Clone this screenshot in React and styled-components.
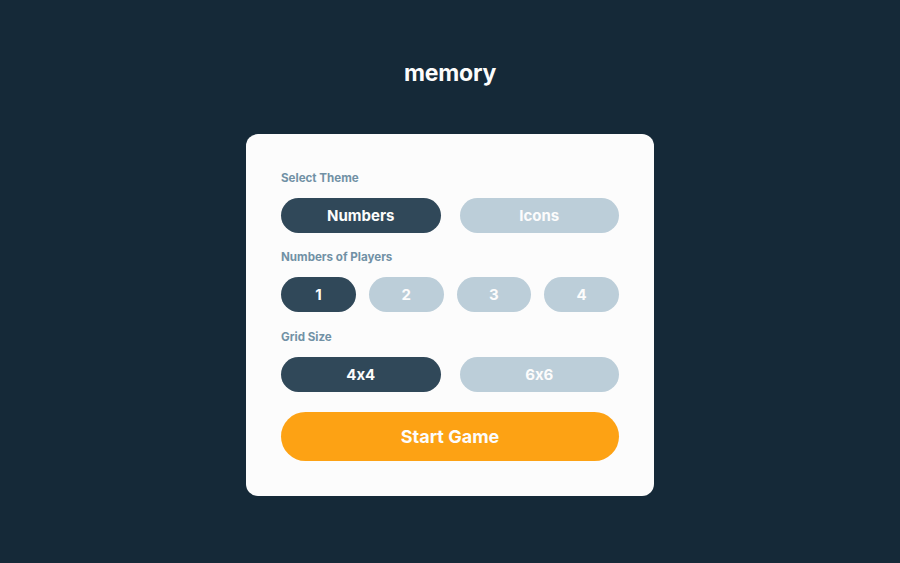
import React, { useState } from "react";
import styled, { createGlobalStyle } from "styled-components";

const GlobalStyle = createGlobalStyle`
  html, body {
    margin: 0;
    padding: 0;
    background: #152938;
  }
  body {
    font-family: Inter, "Noto Sans", sans-serif;
    font-feature-settings: "calt" 0;
  }
`;

const Page = styled.div`
  height: 563px;
  display: flex;
  flex-direction: column;
  align-items: center;
`;

const Logo = styled.h1`
  margin: 58px 0 0;
  height: 30px;
  line-height: 30px;
  font-size: 23px;
  font-weight: 700;
  color: #fcfcfc;
  letter-spacing: -0.2px;
`;

const Card = styled.div`
  margin-top: 46px;
  width: 408px;
  box-sizing: border-box;
  background: #fcfcfc;
  border-radius: 12px;
  padding: 37px 35px 35px;
  display: flex;
  flex-direction: column;
`;

const Label = styled.div`
  font-size: 11.6px;
  line-height: 14px;
  font-weight: 700;
  color: #7191a5;
  margin-bottom: 13px;
`;

const Options = styled.div`
  display: grid;
  grid-template-columns: repeat(${(p) => p.$cols}, 1fr);
  column-gap: ${(p) => p.$gap}px;
  margin-bottom: ${(p) => p.$after}px;
`;

const Option = styled.button`
  height: 35px;
  border: none;
  border-radius: 18px;
  padding: 0;
  font-family: inherit;
  font-feature-settings: "calt" 0;
  font-size: 15px;
  font-weight: 700;
  color: #fcfcfc;
  background: ${(p) => (p.$active ? "#304859" : "#bcced9")};
  cursor: pointer;
`;

const StartButton = styled.button`
  height: 49px;
  border: none;
  border-radius: 25px;
  background: #fda214;
  color: #fcfcfc;
  font-family: inherit;
  font-size: 18px;
  font-weight: 700;
  cursor: pointer;
`;

export default function App() {
  const [theme, setTheme] = useState("Numbers");
  const [players, setPlayers] = useState("1");
  const [grid, setGrid] = useState("4x4");

  return (
    <>
      <GlobalStyle />
      <Page>
        <Logo>memory</Logo>
        <Card>
          <Label>Select Theme</Label>
          <Options $cols={2} $gap={19} $after={17}>
            {["Numbers", "Icons"].map((t) => (
              <Option key={t} $active={theme === t} onClick={() => setTheme(t)}>
                {t}
              </Option>
            ))}
          </Options>
          <Label>Numbers of Players</Label>
          <Options $cols={4} $gap={13} $after={18}>
            {["1", "2", "3", "4"].map((n) => (
              <Option key={n} $active={players === n} onClick={() => setPlayers(n)}>
                {n}
              </Option>
            ))}
          </Options>
          <Label>Grid Size</Label>
          <Options $cols={2} $gap={19} $after={20}>
            {["4x4", "6x6"].map((g) => (
              <Option key={g} $active={grid === g} onClick={() => setGrid(g)}>
                {g}
              </Option>
            ))}
          </Options>
          <StartButton>Start Game</StartButton>
        </Card>
      </Page>
    </>
  );
}
